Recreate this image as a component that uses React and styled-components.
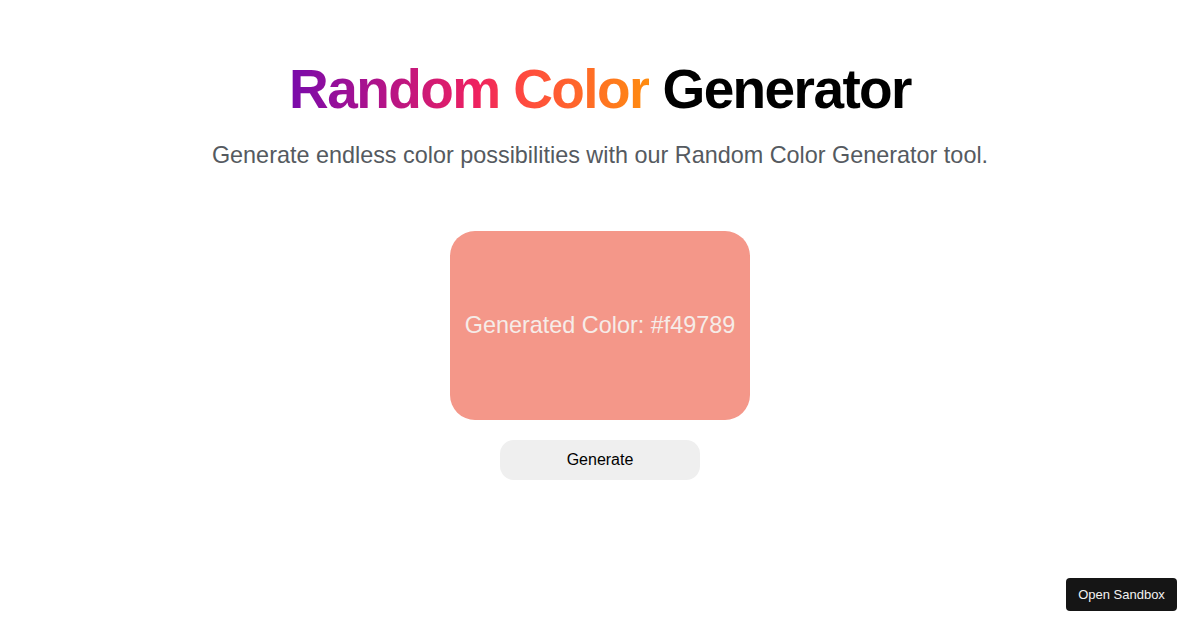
import React, { useState } from "react";
import styled, { createGlobalStyle } from "styled-components";

const GlobalStyle = createGlobalStyle`
  html, body { margin: 0; padding: 0; background: #ffffff; }
  body { font-family: "Liberation Sans", Arial, Helvetica, sans-serif; }
`;

const Page = styled.main`
  display: flex;
  flex-direction: column;
  align-items: center;
  padding-top: 57px;
  text-align: center;
`;

const Title = styled.h1`
  margin: 0;
  font-size: 55px;
  line-height: 64px;
  font-weight: 700;
  letter-spacing: -1.6px;
  color: #000;
`;

const Gradient = styled.span`
  background: linear-gradient(90deg, #780aab 0%, #b0138a 25%, #ee2160 52%, #ff4c3e 66%, #ff8c0f 100%);
  -webkit-background-clip: text;
  background-clip: text;
  color: transparent;
`;

const Subtitle = styled.p`
  margin: 21px 0 0;
  font-size: 23.4px;
  line-height: 27px;
  color: #555a60;
`;

const Swatch = styled.div`
  margin-top: 62px;
  width: 300px;
  height: 189px;
  border-radius: 25px;
  background: ${(p) => p.$color};
  display: flex;
  align-items: center;
  justify-content: center;
  color: #f6ece8;
  font-size: 23.4px;
`;

const GenerateButton = styled.button`
  margin-top: 20px;
  width: 200px;
  height: 40px;
  border: none;
  border-radius: 14px;
  background: #efefef;
  color: #000;
  font-family: inherit;
  font-size: 16px;
  cursor: pointer;
`;

const SandboxButton = styled.button`
  position: fixed;
  right: 23px;
  bottom: 19px;
  width: 111px;
  height: 33px;
  border: none;
  border-radius: 4px;
  background: #151515;
  color: #f2f2f2;
  font-family: inherit;
  font-size: 13px;
  cursor: pointer;
`;

const randomHex = () =>
  "#" + Math.floor(Math.random() * 0xffffff).toString(16).padStart(6, "0");

export default function App() {
  const [color, setColor] = useState("#f49789");
  return (
    <>
      <GlobalStyle />
      <Page>
        <Title>
          <Gradient>Random Color</Gradient> Generator
        </Title>
        <Subtitle>
          Generate endless color possibilities with our Random Color Generator tool.
        </Subtitle>
        <Swatch $color={color}>Generated Color: {color}</Swatch>
        <GenerateButton onClick={() => setColor(randomHex())}>Generate</GenerateButton>
      </Page>
      <SandboxButton>Open Sandbox</SandboxButton>
    </>
  );
}
